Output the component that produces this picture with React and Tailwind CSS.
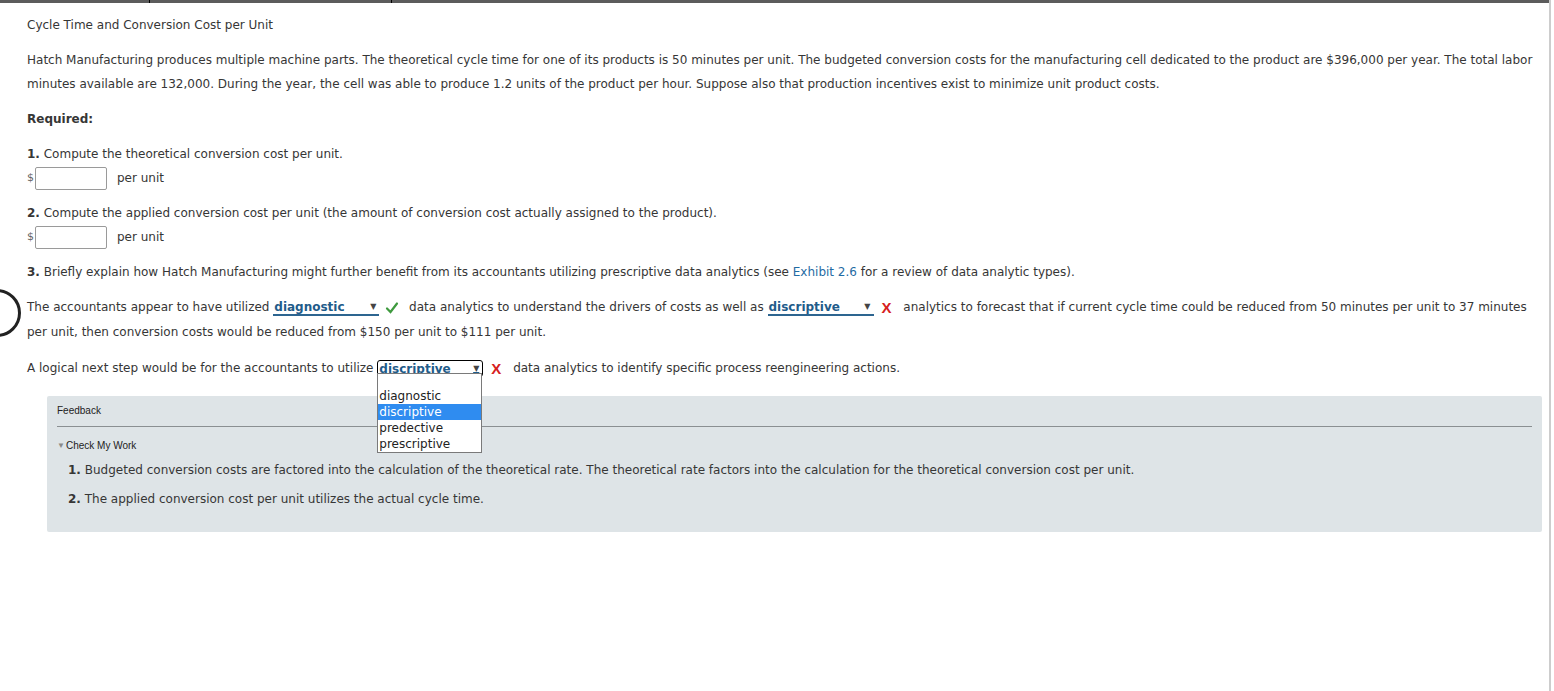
import React from 'react';

const Sel = ({ value, focused }) => (
    <span
        className={`inline-flex items-center justify-between w-[106px] h-[17px] align-middle px-[1px] font-bold text-[#1f5c8a] ${focused ? 'border border-black rounded-[3px] underline' : 'border-b-2 border-[#2d6590]'}`}
    >
        <span className="leading-[14px]">{value}</span>
        <span className="text-[8px] text-[#444] pr-[2px]">▼</span>
    </span>
);

const Check = () => (
    <svg width="14" height="14" viewBox="0 0 14 14" className="inline-block align-middle mx-[6px]">
        <path d="M2 7.5 L5.5 11 L12 2.5" stroke="#3f9a3f" strokeWidth="2.2" fill="none" strokeLinecap="round" />
    </svg>
);

const Cross = () => (
    <span className="inline-block align-middle mx-[8px] font-bold text-[15px] leading-[14px] text-[#d62020] font-['Liberation_Sans',sans-serif]">X</span>
);

const MoneyInput = () => (
    <div className="flex items-center h-[24px]">
        <span className="text-[#666] text-[11px] w-[8px]">$</span>
        <span className="w-[72px] h-[23px] border border-[#9a9a9a] rounded-[2px] bg-white"></span>
        <span className="ml-[10px]">per unit</span>
    </div>
);

export default function App() {
    return (
        <div className="w-full min-h-[691px] bg-white overflow-hidden">
            <div className="relative w-[1551px] min-h-[691px] border-r-2 border-[#cdcdcd] font-['DejaVu_Sans',Verdana,sans-serif] text-[12px] leading-[24px] text-[#363636]">
                {/* top bar */}
                <div className="h-[3px] bg-[#5c5c5c] flex">
                    <div className="w-[150px] border-r border-black"></div>
                    <div className="w-[242px] border-r border-black"></div>
                </div>

                {/* circle on left edge */}
                <div className="absolute left-[-27px] top-[289px] w-[48px] h-[48px] rounded-full border-[3px] border-[#222]"></div>

                <div className="pl-[27px] pr-[12px] pt-[10px]">
                    <p className="mb-[11px]">Cycle Time and Conversion Cost per Unit</p>
                    <p className="mb-[11px]">
                        Hatch Manufacturing produces multiple machine parts. The theoretical cycle time for one of its products is 50 minutes per unit. The budgeted conversion costs for the manufacturing cell dedicated to the product are $396,000 per year. The total labor minutes available are 132,000. During the year, the cell was able to produce 1.2 units of the product per hour. Suppose also that production incentives exist to minimize unit product costs.
                    </p>
                    <p className="mb-[11px] font-bold">Required:</p>

                    <div className="mb-[11px]">
                        <p><b>1.</b> Compute the theoretical conversion cost per unit.</p>
                        <MoneyInput />
                    </div>
                    <div className="mb-[11px]">
                        <p><b>2.</b> Compute the applied conversion cost per unit (the amount of conversion cost actually assigned to the product).</p>
                        <MoneyInput />
                    </div>
                    <p className="mb-[11px]">
                        <b>3.</b> Briefly explain how Hatch Manufacturing might further benefit from its accountants utilizing prescriptive data analytics (see <span className="text-[#1f6ba3]">Exhibit 2.6</span> for a review of data analytic types).
                    </p>
                    <p className="mb-[11px] leading-[25px]">
                        The accountants appear to have utilized <Sel value="diagnostic" /><Check /> data analytics to understand the drivers of costs as well as <Sel value="discriptive" /><Cross /> analytics to forecast that if current cycle time could be reduced from 50 minutes per unit to 37 minutes per unit, then conversion costs would be reduced from $150 per unit to $111 per unit.
                    </p>
                    <p className="mb-[16px]">
                        A logical next step would be for the accountants to utilize{' '}
                        <span className="relative inline-block">
                            <Sel value="discriptive" focused />
                            <span className="absolute left-0 top-[17px] z-10 w-[105px] bg-white border border-[#7a7a7a] flex flex-col leading-[16px] font-normal">
                                <span className="h-[14px]"></span>
                                <span className="px-[1px] text-[#222]">diagnostic</span>
                                <span className="px-[1px] bg-[#2f8cf0] text-white">discriptive</span>
                                <span className="px-[1px] text-[#222]">predective</span>
                                <span className="px-[1px] text-[#222]">prescriptive</span>
                            </span>
                        </span>
                        <Cross /> data analytics to identify specific process reengineering actions.
                    </p>

                    {/* feedback */}
                    <div className="ml-[20px] w-[1495px] bg-[#dee4e7] rounded-[2px] px-[10px] pt-[6px] pb-[18px]">
                        <div className="font-['Liberation_Sans',Arial,sans-serif] text-[10px] leading-[18px] text-[#222] pb-[6px] border-b border-[#8a8f92]">Feedback</div>
                        <div className="mt-[9px] font-['Liberation_Sans',Arial,sans-serif] text-[10px] leading-[20px] text-[#222] flex items-center">
                            <span className="text-[#8a8a8a] text-[8px] mr-[1px]">▼</span>Check My Work
                        </div>
                        <div className="pl-[11px] text-[12px] leading-[29px]">
                            <p><b>1.</b> Budgeted conversion costs are factored into the calculation of the theoretical rate. The theoretical rate factors into the calculation for the theoretical conversion cost per unit.</p>
                            <p><b>2.</b> The applied conversion cost per unit utilizes the actual cycle time.</p>
                        </div>
                    </div>
                </div>
            </div>
        </div>
    );
}
